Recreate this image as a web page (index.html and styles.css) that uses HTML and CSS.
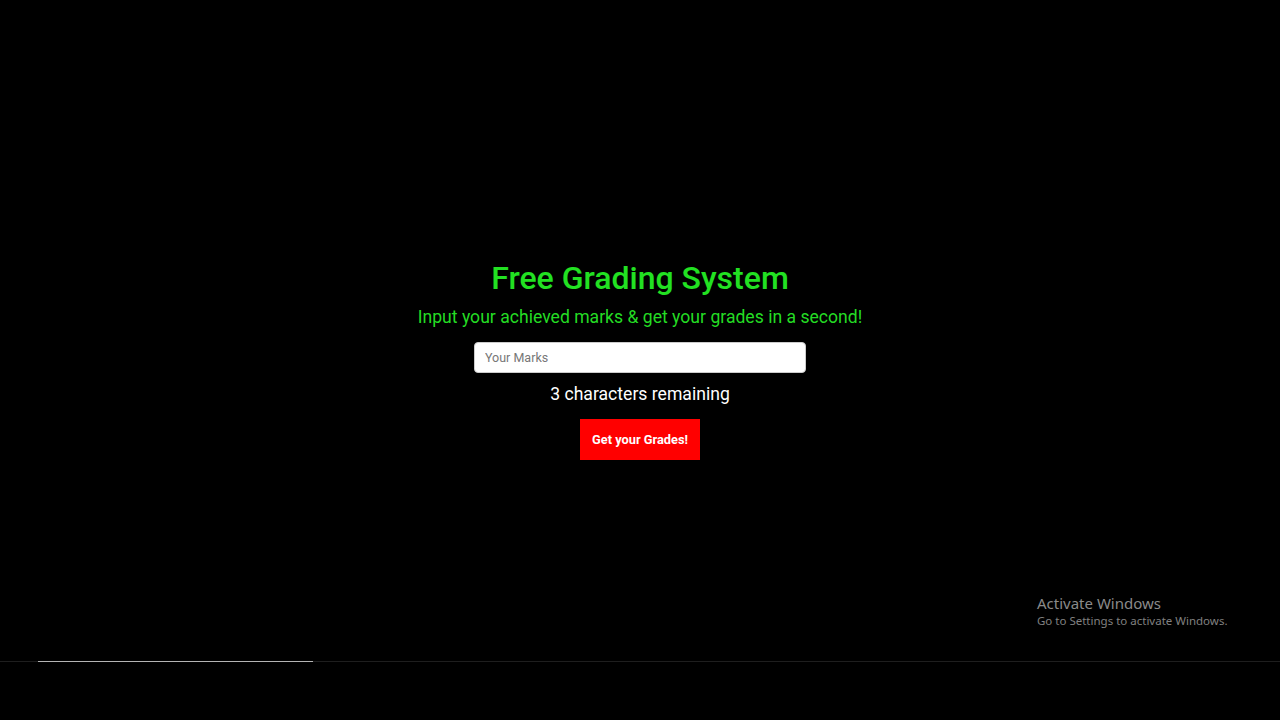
FILE: index.html
```html
<!DOCTYPE html>
<html lang="en">

<head>
  <meta charset="UTF-8">
  <meta name="viewport" content="width=device-width, initial-scale=1.0">
  <title>Free Grading System</title>
  <link rel="stylesheet" href="styles.css">
</head>

<body>
  <div class="page">
    <div class="grader">
      <h1 class="title">Free Grading System</h1>
      <p class="subtitle">Input your achieved marks &amp; get your grades in a second!</p>
      <input type="text" class="marks" placeholder="Your Marks" maxlength="3">
      <p class="remaining"><span class="count">3</span> characters remaining</p>
      <button class="getBtn">Get your Grades!</button>
    </div>
  </div>

  <div class="progress">
    <div class="progressDone"></div>
  </div>

  <div class="activate">
    <div class="activateTitle">Activate Windows</div>
    <div class="activateText">Go to Settings to activate Windows.</div>
  </div>

  <script>
    let marks = document.querySelector(".marks");
    let count = document.querySelector(".count");
    marks.addEventListener("input", function () {
      count.textContent = 3 - marks.value.length;
    })
  </script>
</body>

</html>
```

FILE: styles.css
```css
body {
  margin: 0;
  background-color: #000;
  font-family: Roboto, "Liberation Sans", sans-serif;
  height: 720px;
  overflow: hidden;
}

.page {
  height: 661px;
  display: flex;
  justify-content: center;
}

.grader {
  display: flex;
  flex-direction: column;
  align-items: center;
  padding-top: 259px;
}

.title {
  margin: 0;
  font-size: 32px;
  line-height: 38px;
  font-weight: 500;
  color: #22e122;
}

.subtitle {
  margin: 9px 0 0;
  font-size: 17.6px;
  line-height: 22px;
  color: #24dc24;
}

.marks {
  margin-top: 14px;
  width: 332px;
  height: 31px;
  box-sizing: border-box;
  border: 1px solid #ccc;
  border-radius: 4px;
  padding: 0 10px;
  font-family: Roboto, "Liberation Sans", sans-serif;
  font-size: 12.5px;
  color: #333;
  background-color: #fff;
  outline: none;
}

.marks::placeholder {
  color: #777;
}

.remaining {
  margin: 10px 0 0;
  font-size: 17.6px;
  line-height: 22px;
  color: #fff;
}

.getBtn {
  margin-top: 14px;
  width: 120px;
  height: 41px;
  border: none;
  background-color: #ff0000;
  color: #fff;
  font-family: Roboto, "Liberation Sans", sans-serif;
  font-weight: 700;
  font-size: 12.8px;
  cursor: pointer;
}

.progress {
  height: 1px;
  background-color: #1e1e1e;
}

.progressDone {
  margin-left: 38px;
  width: 275px;
  height: 1px;
  background-color: #b4b4b4;
}

.activate {
  position: absolute;
  left: 1037px;
  top: 593px;
  font-family: "Noto Sans", "Open Sans", sans-serif;
  color: #8a8a8a;
}

.activateTitle {
  font-size: 15px;
  line-height: 20px;
}

.activateText {
  font-size: 11.5px;
  line-height: 16px;
  color: #808080;
}
```
